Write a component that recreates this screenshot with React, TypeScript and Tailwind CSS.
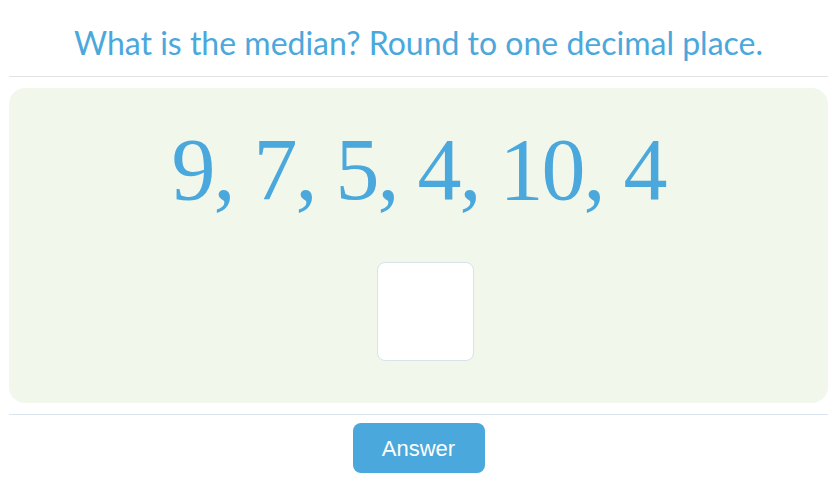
export default function App() {
  return (
    <div className="w-[840px] h-[501px] bg-white flex flex-col items-stretch pl-[9px] pr-[12px] overflow-hidden">
      <div className="h-[77px] flex items-center justify-center border-b border-[#e3e3e3]">
        <h1
          className="text-[32px] text-[#4aa8dc] pt-[10px]"
          style={{ fontFamily: 'Lato, "Open Sans", sans-serif' }}
        >
          What is the median? Round to one decimal place.
        </h1>
      </div>

      <div className="mt-[11px] h-[315px] rounded-[16px] bg-[#f2f7ec] flex flex-col items-center">
        <div
          className="mt-[38px] text-[88px] leading-none tracking-[-2px] text-[#4aa8dc]"
          style={{ fontFamily: '"Liberation Serif", "Times New Roman", serif' }}
        >
          9, 7, 5, 4, 10, 4
        </div>
        <input
          type="text"
          className="mt-[48px] ml-[14px] w-[97px] h-[99px] bg-white border border-[#d9e2e8] rounded-[8px] outline-none text-center text-[40px]"
        />
      </div>

      <div className="mt-[11px] border-t border-[#dbe5ee] flex justify-center pt-[8px]">
        <button
          type="button"
          className="w-[132px] h-[50px] rounded-[8px] bg-[#4aa8dc] text-white text-[22px]"
          style={{ fontFamily: '"Liberation Sans", Arial, sans-serif' }}
        >
          Answer
        </button>
      </div>
    </div>
  )
}
